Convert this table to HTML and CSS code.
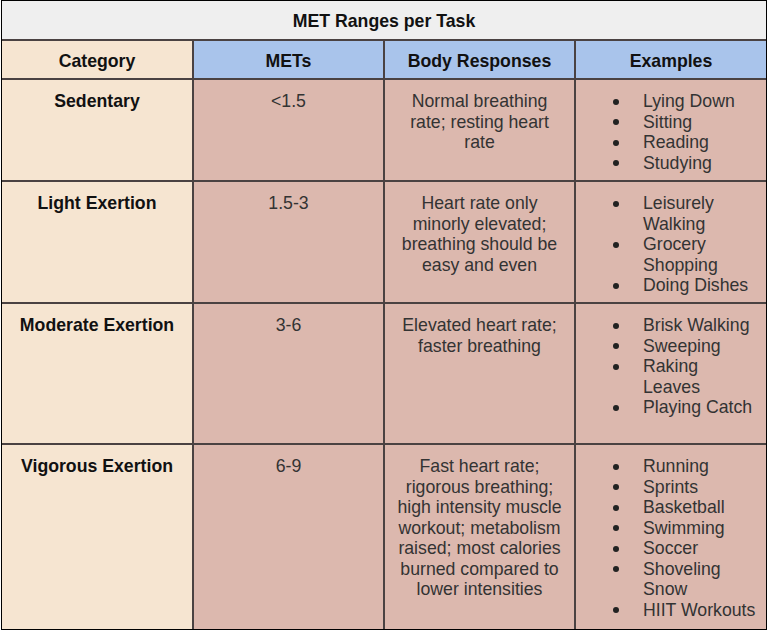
FILE: index.html
```html
<!DOCTYPE html>
<html lang="en">
<head>
<meta charset="utf-8">
<title>MET Ranges per Task</title>
<link rel="stylesheet" href="styles.css">
</head>
<body>
<div class="table">
  <div class="cell title">MET Ranges per Task</div>

  <div class="cell head head-cat">Category</div>
  <div class="cell head">METs</div>
  <div class="cell head">Body Responses</div>
  <div class="cell head last">Examples</div>

  <div class="cell cat">Sedentary</div>
  <div class="cell body">&lt;1.5</div>
  <div class="cell body">Normal breathing rate; resting heart rate</div>
  <div class="cell body list last">
    <ul><li>Lying Down</li><li>Sitting</li><li>Reading</li><li>Studying</li></ul>
  </div>

  <div class="cell cat">Light Exertion</div>
  <div class="cell body">1.5-3</div>
  <div class="cell body">Heart rate only minorly elevated; breathing should be easy and even</div>
  <div class="cell body list last">
    <ul><li>Leisurely Walking</li><li>Grocery Shopping</li><li>Doing Dishes</li></ul>
  </div>

  <div class="cell cat">Moderate Exertion</div>
  <div class="cell body">3-6</div>
  <div class="cell body">Elevated heart rate; faster breathing</div>
  <div class="cell body list last">
    <ul><li>Brisk Walking</li><li>Sweeping</li><li>Raking Leaves</li><li>Playing Catch</li></ul>
  </div>

  <div class="cell cat bottom">Vigorous Exertion</div>
  <div class="cell body bottom">6-9</div>
  <div class="cell body bottom">Fast heart rate; rigorous breathing; high intensity muscle workout; metabolism raised; most calories burned compared to lower intensities</div>
  <div class="cell body list last bottom">
    <ul><li>Running</li><li>Sprints</li><li>Basketball</li><li>Swimming</li><li>Soccer</li><li>Shoveling Snow</li><li>HIIT Workouts</li></ul>
  </div>
</div>
</body>
</html>
```

FILE: styles.css
```css
html, body {
  margin: 0;
  padding: 0;
  background: #ffffff;
}

body {
  font-family: "Liberation Sans", Arial, sans-serif;
  font-size: 17.7px;
  line-height: 20.5px;
  color: #333333;
}

.table {
  margin-left: 1px;
  width: 766px;
  box-sizing: border-box;
  border: 1px solid #000000;
  border-right-width: 1.5px;
  display: grid;
  grid-template-columns: 192px 191px 191px 1fr;
  grid-template-rows: 40px 39px 102px 122px 141px 184px;
}

.cell {
  box-sizing: border-box;
  border-right: 2px solid #4a4242;
  border-bottom: 2px solid #4a4242;
  text-align: center;
}

.cell.last {
  border-right: none;
}

.cell.bottom {
  border-bottom: none;
}

.title {
  grid-column: 1 / -1;
  border-right: none;
  background: #efefef;
  font-weight: bold;
  color: #111111;
  display: flex;
  align-items: center;
  justify-content: center;
  padding-top: 3px;
}

.head {
  background: #a9c4eb;
  font-weight: bold;
  color: #111111;
  display: flex;
  align-items: center;
  justify-content: center;
  padding-top: 4px;
}

.head-cat {
  background: #f6e5d1;
}

.cat {
  background: #f6e5d1;
  font-weight: bold;
  color: #111111;
  padding-top: 11px;
}

.body {
  background: #dcb8ae;
  padding: 11px 8px 0 8px;
}

.list {
  text-align: left;
  padding: 11px 8px 0 37px;
}

.list ul {
  margin: 0;
  padding: 0;
  list-style: none;
}

.list li {
  display: flex;
  align-items: flex-start;
}

.list li::before {
  content: "";
  flex: 0 0 6px;
  width: 6px;
  height: 6px;
  margin-top: 7.5px;
  margin-right: 24px;
  border-radius: 50%;
  background: #222222;
}
```
